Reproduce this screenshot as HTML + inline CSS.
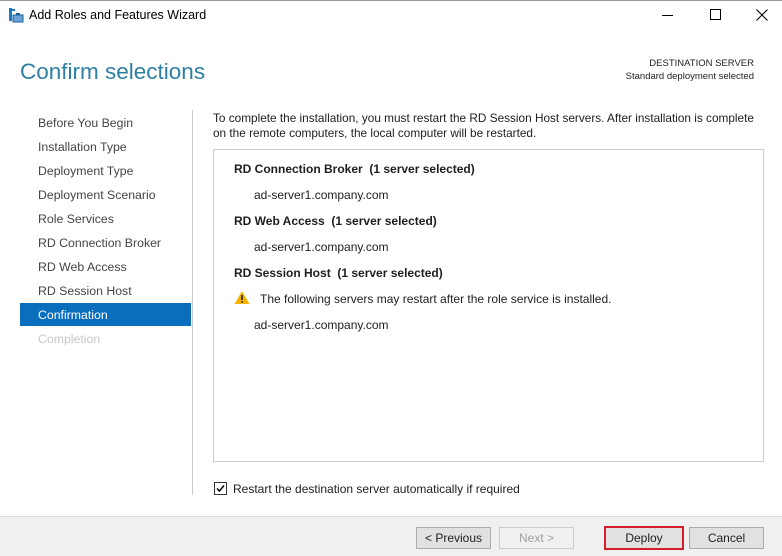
<!DOCTYPE html>
<html><head><style>
*{margin:0;padding:0;box-sizing:border-box}
body{width:782px;height:556px;position:relative;background:#fff;font-family:"Liberation Sans",sans-serif;font-size:12px;color:#1e1e1e;overflow:hidden}
.a{position:absolute;white-space:nowrap}
.nav{position:absolute;left:38px;font-size:12.3px;color:#444}
.btn{position:absolute;top:527px;height:22px;border:1px solid #adadad;background:#e1e1e1;font-size:12px;text-align:center;line-height:20px}
</style></head><body>
<div class="a" style="left:0;top:0;width:782px;height:1px;background:#999"></div>
<svg class="a" style="left:8px;top:8px" width="16" height="16" viewBox="0 0 16 16"><rect x="1" y="0" width="3" height="13" fill="#1c7bc8"/><rect x="1" y="1" width="6" height="2" fill="#1c7bc8"/><rect x="5" y="7" width="10" height="7" fill="#6aa4d6" stroke="#1a5f9a"/><rect x="8" y="5" width="4" height="2" fill="#1a5f9a"/></svg>
<div class="a" style="left:29px;top:8px;font-size:12.5px;color:#000">Add Roles and Features Wizard</div>
<div class="a" style="left:662px;top:15px;width:11px;height:1px;background:#000"></div>
<div class="a" style="left:710px;top:9px;width:11px;height:11px;border:1px solid #000"></div>
<svg class="a" style="left:756px;top:9px" width="12" height="12"><path d="M0.5 0.5L11.5 11.5M11.5 0.5L0.5 11.5" stroke="#000" stroke-width="1.1"/></svg>
<div class="a" style="left:20px;top:59px;font-size:22.5px;color:#2d7fa3">Confirm selections</div>
<div class="a" style="right:28px;top:57px;font-size:9.5px;text-align:right;line-height:13px;color:#222">DESTINATION SERVER<br>Standard deployment selected</div>
<div class="nav" style="top:116px">Before You Begin</div>
<div class="nav" style="top:140px">Installation Type</div>
<div class="nav" style="top:164px">Deployment Type</div>
<div class="nav" style="top:188px">Deployment Scenario</div>
<div class="nav" style="top:212px">Role Services</div>
<div class="nav" style="top:236px">RD Connection Broker</div>
<div class="nav" style="top:260px">RD Web Access</div>
<div class="nav" style="top:284px">RD Session Host</div>
<div class="a" style="left:20px;top:303px;width:171px;height:23px;background:#0a6ebd"></div>
<div class="nav" style="top:308px;color:#fff">Confirmation</div>
<div class="nav" style="top:332px;color:#c8c8c8">Completion</div>
<div class="a" style="left:192px;top:110px;width:1px;height:385px;background:#ccc"></div>
<div class="a" style="left:213px;top:111px;font-size:11.8px;line-height:15px">To complete the installation, you must restart the RD Session Host servers. After installation is complete<br>on the remote computers, the local computer will be restarted.</div>
<div class="a" style="left:213px;top:149px;width:551px;height:313px;border:1px solid #ccc"></div>
<div class="a" style="left:234px;top:162px;font-weight:bold">RD Connection Broker&nbsp; (1 server selected)</div>
<div class="a" style="left:254px;top:188px">ad-server1.company.com</div>
<div class="a" style="left:234px;top:214px;font-weight:bold">RD Web Access&nbsp; (1 server selected)</div>
<div class="a" style="left:254px;top:240px">ad-server1.company.com</div>
<div class="a" style="left:234px;top:266px;font-weight:bold">RD Session Host&nbsp; (1 server selected)</div>
<svg class="a" style="left:234px;top:290px" width="16" height="15"><path d="M8 1L15.5 14H0.5Z" fill="#f5b300"/><rect x="7.2" y="5" width="1.6" height="5" fill="#222"/><rect x="7.2" y="11" width="1.6" height="1.6" fill="#222"/></svg>
<div class="a" style="left:260px;top:292px">The following servers may restart after the role service is installed.</div>
<div class="a" style="left:254px;top:318px">ad-server1.company.com</div>
<div class="a" style="left:214px;top:482px;width:13px;height:13px;border:1px solid #333;background:#fff"></div>
<svg class="a" style="left:216px;top:484px" width="9" height="9"><path d="M1 4.5L3.5 7L8 1.5" stroke="#000" stroke-width="1.5" fill="none"/></svg>
<div class="a" style="left:233px;top:482px">Restart the destination server automatically if required</div>
<div class="a" style="left:0;top:516px;width:782px;height:40px;background:#f0f0f0;border-top:1px solid #dcdcdc"></div>
<div class="btn" style="left:416px;width:75px">&lt; Previous</div>
<div class="btn" style="left:499px;width:75px;color:#a0a0a0;background:#f0f0f0;border-color:#ccc">Next &gt;</div>
<div class="btn" style="left:604px;width:80px;top:526px;height:24px;border:2px solid #d21f2b;line-height:20px">Deploy</div>
<div class="btn" style="left:689px;width:75px">Cancel</div>
</body></html>
